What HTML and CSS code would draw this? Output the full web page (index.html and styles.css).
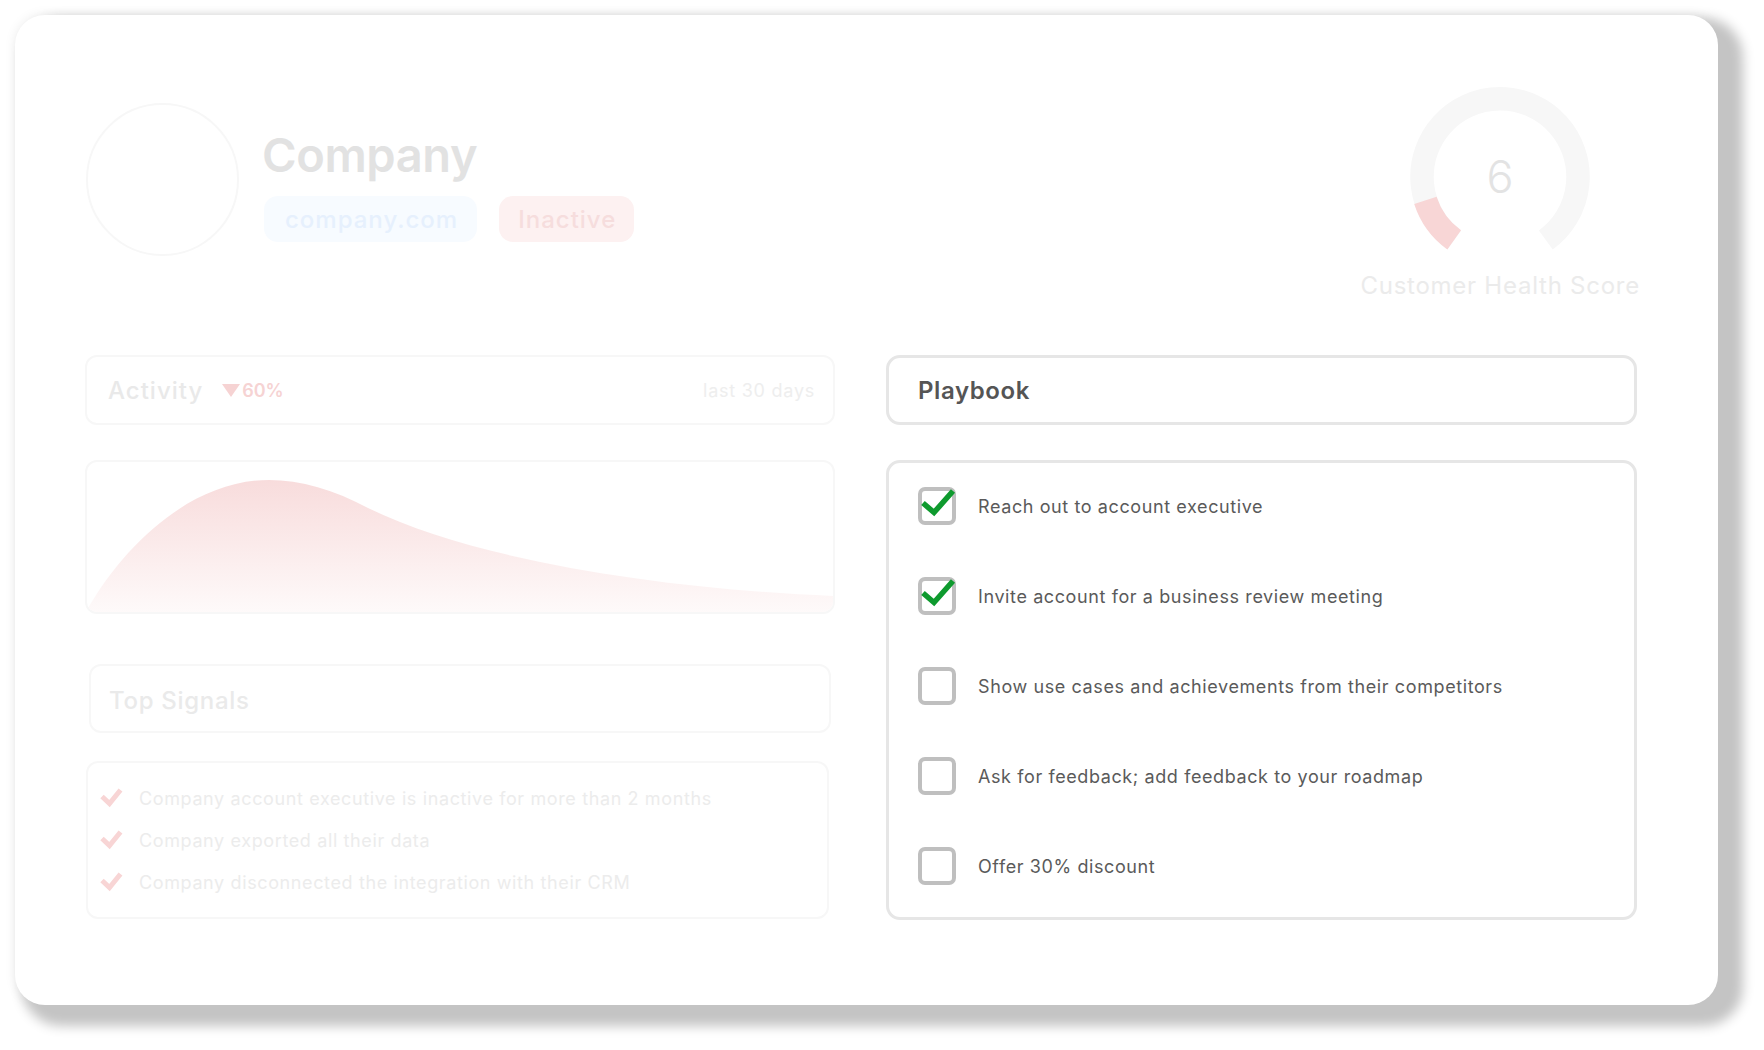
FILE: index.html
```html
<!DOCTYPE html>
<html lang="en">
<head>
<meta charset="utf-8">
<title>Company health</title>
<link rel="stylesheet" href="styles.css">
</head>
<body>
<div class="panel">
  <header class="header">
    <div class="identity">
      <div class="avatar"></div>
      <div class="title-block">
        <h1 class="title">Company</h1>
        <div class="pills">
          <span class="pill pill-domain">company.com</span>
          <span class="pill pill-status">Inactive</span>
        </div>
      </div>
    </div>
    <div class="health">
      <svg class="gauge" width="180" height="180" viewBox="0 0 180 180">
        <path class="gauge-track" d="M44.2,152.9 A78,78 0 1 1 135.8,152.9"/>
        <path class="gauge-value" d="M44.2,152.9 A78,78 0 0 1 15.4,113.4"/>
        <text class="gauge-num" x="90" y="106" text-anchor="middle">6</text>
      </svg>
      <div class="health-label">Customer Health Score</div>
    </div>
  </header>

  <main class="content">
    <section class="col-left">
      <div class="box activity-head">
        <span class="activity-title">Activity</span>
        <span class="trend">
          <svg class="trend-arrow" width="18" height="13" viewBox="0 0 18 13"><polygon points="0,0 18,0 9,13"/></svg>
          <span class="trend-val">60%</span>
        </span>
        <span class="period">last 30 days</span>
      </div>
      <div class="box chart">
        <svg width="746" height="150" viewBox="0 0 746 150" preserveAspectRatio="none">
          <defs>
            <linearGradient id="fillGrad" x1="0" y1="0" x2="0" y2="1">
              <stop offset="0" stop-color="#f8dcdc"/>
              <stop offset="1" stop-color="#fefafa"/>
            </linearGradient>
          </defs>
          <path d="M0,148 C40,78 108,18 182,18 C213,18 248,28 281,46 C398,103 598,128 748,134 L748,152 L0,152 Z" fill="url(#fillGrad)"/>
        </svg>
      </div>
      <div class="box signals-head">Top Signals</div>
      <div class="box signals-list">
        <div class="signal">
          <svg class="signal-check" width="22" height="20" viewBox="0 0 22 20"><polyline points="2,8.5 9.5,15.5 20.5,2"/></svg>
          <span>Company account executive is inactive for more than 2 months</span>
        </div>
        <div class="signal">
          <svg class="signal-check" width="22" height="20" viewBox="0 0 22 20"><polyline points="2,8.5 9.5,15.5 20.5,2"/></svg>
          <span>Company exported all their data</span>
        </div>
        <div class="signal">
          <svg class="signal-check" width="22" height="20" viewBox="0 0 22 20"><polyline points="2,8.5 9.5,15.5 20.5,2"/></svg>
          <span>Company disconnected the integration with their CRM</span>
        </div>
      </div>
    </section>

    <section class="col-right">
      <div class="pbox playbook-head">Playbook</div>
      <div class="pbox playbook-list">
        <label class="task">
          <span class="checkbox is-checked">
            <svg class="tick" width="38" height="38" viewBox="0 0 38 38"><polyline points="5,16 16,25.5 35,4"/></svg>
          </span>
          <span class="task-text">Reach out to account executive</span>
        </label>
        <label class="task">
          <span class="checkbox is-checked">
            <svg class="tick" width="38" height="38" viewBox="0 0 38 38"><polyline points="5,16 16,25.5 35,4"/></svg>
          </span>
          <span class="task-text">Invite account for a business review meeting</span>
        </label>
        <label class="task">
          <span class="checkbox"></span>
          <span class="task-text">Show use cases and achievements from their competitors</span>
        </label>
        <label class="task">
          <span class="checkbox"></span>
          <span class="task-text">Ask for feedback; add feedback to your roadmap</span>
        </label>
        <label class="task">
          <span class="checkbox"></span>
          <span class="task-text">Offer 30% discount</span>
        </label>
      </div>
    </section>
  </main>
</div>
</body>
</html>
```

FILE: styles.css
```css
* { box-sizing: border-box; }

html, body {
  margin: 0;
  padding: 0;
  background: #ffffff;
}

body {
  font-family: Inter, "Noto Sans", "Liberation Sans", sans-serif;
  width: 1764px;
  height: 1050px;
  overflow: hidden;
}

.panel {
  margin: 15px;
  width: 1703px;
  height: 990px;
  border-radius: 30px;
  background: #ffffff;
  box-shadow: 16px 12px 12px 9px #c4c4c4, 0 0 12px rgba(0, 0, 0, 0.08);
  padding: 72px 81px 0 70px;
}

/* Header */
.header {
  display: flex;
  justify-content: space-between;
  align-items: flex-start;
  height: 268px;
}

.identity {
  display: flex;
  align-items: flex-start;
  gap: 23px;
  padding-left: 1px;
}

.avatar {
  width: 153px;
  height: 153px;
  border-radius: 50%;
  border: 2px solid #f7f7f7;
  margin-top: 16px;
}

.title-block {
  margin-top: 40px;
}

.title {
  margin: 0;
  font-size: 47px;
  line-height: 56px;
  font-weight: 600;
  color: #e2e2e2;
  letter-spacing: -0.4px;
}

.pills {
  display: flex;
  gap: 22px;
  margin-top: 13px;
}

.pill {
  height: 46px;
  display: flex;
  align-items: center;
  padding: 0 19px 0 21px;
  border-radius: 14px;
  font-size: 24px;
  font-weight: 500;
  letter-spacing: 1px;
}

.pill-domain {
  background: #f7fbff;
  color: #e6f0fd;
  margin-left: 2px;
}

.pill-status {
  background: #fdf1f1;
  color: #f6dddd;
  padding: 0 18px 0 19px;
}

.health {
  display: flex;
  flex-direction: column;
  align-items: center;
  margin-right: -3px;
}

.gauge {
  display: block;
}

.gauge-track {
  fill: none;
  stroke: #f7f7f7;
  stroke-width: 23.5;
}

.gauge-value {
  fill: none;
  stroke: #f8d6d6;
  stroke-width: 23.5;
}

.gauge-num {
  font-family: Inter, "Noto Sans", sans-serif;
  font-size: 45px;
  font-weight: 300;
  fill: #e3e3e3;
}

.health-label {
  margin-top: 5px;
  font-size: 24px;
  line-height: 28px;
  color: #ebebeb;
  letter-spacing: 0.75px;
  white-space: nowrap;
}

/* Content */
.content {
  display: grid;
  grid-template-columns: 750px 751px;
  column-gap: 51px;
}

.col-left, .col-right {
  display: flex;
  flex-direction: column;
}

.box {
  border: 2px solid #f7f7f7;
  border-radius: 12px;
}

.activity-head {
  height: 70px;
  display: flex;
  align-items: center;
  padding: 0 18px 0 21px;
}

.activity-title {
  font-size: 24px;
  font-weight: 500;
  color: #e9e9e9;
  letter-spacing: 1px;
}

.trend {
  display: flex;
  align-items: center;
  margin-left: 19px;
  color: #f6d3d3;
  font-size: 18px;
  font-weight: 600;
}

.trend-arrow {
  fill: #f6d3d3;
  margin-right: 2px;
  margin-top: 1px;
}

.period {
  margin-left: auto;
  font-size: 18px;
  color: #eeeeee;
  letter-spacing: 0.75px;
}

.chart {
  margin-top: 35px;
  height: 154px;
  overflow: hidden;
}

.chart svg {
  display: block;
}

.signals-head {
  margin: 50px 4px 0;
  height: 69px;
  display: flex;
  align-items: center;
  padding: 3px 0 0 18px;
  font-size: 24px;
  font-weight: 500;
  color: #eaeaea;
  letter-spacing: 0.7px;
}

.signals-list {
  margin: 28px 6px 0 1px;
  height: 158px;
  padding: 14px 12px;
}

.signal {
  display: flex;
  align-items: center;
  gap: 17px;
  height: 42px;
  font-size: 18px;
  color: #ececec;
  letter-spacing: 0.62px;
}

.signal-check {
  flex: none;
  overflow: visible;
}

.signal-check polyline {
  fill: none;
  stroke: #f8d5d5;
  stroke-width: 5;
}

/* Playbook */
.pbox {
  border: 3px solid #e6e6e6;
  border-radius: 14px;
}

.playbook-head {
  height: 70px;
  display: flex;
  align-items: center;
  padding-left: 29px;
  font-size: 24px;
  font-weight: 600;
  color: #555555;
  letter-spacing: 0.6px;
}

.playbook-list {
  margin-top: 35px;
  height: 460px;
  padding: 24px 29px;
  display: flex;
  flex-direction: column;
  gap: 52px;
}

.task {
  display: flex;
  align-items: center;
  gap: 22px;
  height: 38px;
}

.checkbox {
  position: relative;
  flex: none;
  width: 38px;
  height: 38px;
  border: 4px solid #bfbfbf;
  border-radius: 7px;
  background: #ffffff;
}

.tick {
  position: absolute;
  left: -4px;
  top: -4px;
  overflow: visible;
}

.tick polyline {
  fill: none;
  stroke: #0e9a2e;
  stroke-width: 5.5;
}

.task-text {
  font-size: 18px;
  color: #5a5a5a;
  letter-spacing: 0.6px;
}
```
